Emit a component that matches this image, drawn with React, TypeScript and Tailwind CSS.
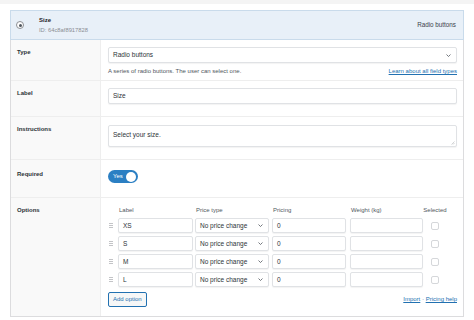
import React from 'react'

const field =
  'h-[15px] border border-[#e0e2e5] rounded-[2px] bg-white px-[4px] flex items-center text-[6.5px] text-[#2c3338] shadow-[0_1px_1px_rgba(0,0,0,0.05)]'

function Chevron({ className = '' }: { className?: string }) {
  return (
    <svg width="5" height="3" viewBox="0 0 5 3" className={className}>
      <polyline points="0.5,0.5 2.5,2.5 4.5,0.5" fill="none" stroke="#50575e" strokeWidth="0.8" />
    </svg>
  )
}

function Handle() {
  return (
    <div className="flex flex-col gap-[1px] w-[4px] ml-[1px]">
      <span className="h-[1px] bg-[#c3c4c7]" />
      <span className="h-[1px] bg-[#c3c4c7]" />
      <span className="h-[1px] bg-[#c3c4c7]" />
    </div>
  )
}

function Row({ label, h, pt, children }: { label: string; h: string; pt: string; children: React.ReactNode }) {
  return (
    <div className={`flex border-b border-[#eeeeee] ${h}`}>
      <div className="w-[90px] shrink-0 bg-[#f9f9f9] border-r border-[#eeeeee] pl-[6px]">
        <div className={`${pt} text-[6px] leading-[8px] font-bold text-[#2c3338]`}>{label}</div>
      </div>
      <div className="flex-1 pl-[7px] pr-[6px]">{children}</div>
    </div>
  )
}

const options = ['XS', 'S', 'M', 'L']

export default function App() {
  return (
    <div className="w-[474px] h-[320px] overflow-hidden bg-white font-['Liberation_Sans',Arial,sans-serif]">
      <div className="h-[4px] bg-[#f4f4f4]" />
      <div className="pt-[6px] pl-[10px] pr-[10px]">
        {/* field header */}
        <div className="h-[30px] border border-[#c9dbeb] bg-[#e8f0f8] flex items-center pl-[5px] pr-[7px]">
          <div className="w-[8px] h-[8px] rounded-full border border-[#8c8f94] bg-white flex items-center justify-center">
            <div className="w-[3px] h-[3px] rounded-full bg-[#50575e]" />
          </div>
          <div className="ml-[15px] flex flex-col">
            <span className="text-[6px] leading-[8px] font-bold text-[#1d2327]">Size</span>
            <span className="mt-[2px] text-[5.8px] leading-[8px] text-[#8c8f94]">ID: 64c8af8917828</span>
          </div>
          <span className="ml-auto text-[6.3px] text-[#3c434a]">Radio buttons</span>
        </div>

        {/* settings */}
        <div className="border-x border-b border-[#dcdcde] flex flex-col">
          <Row label="Type" h="h-[41px]" pt="pt-[8px]">
            <div className="pt-[7px]">
              <div className={`${field} h-[16px] justify-between pr-[5px]`}>
                <span>Radio buttons</span>
                <Chevron />
              </div>
              <div className="mt-[4px] flex justify-between text-[6px] leading-[8px]">
                <span className="text-[#50575e]">A series of radio buttons. The user can select one.</span>
                <span className="text-[#2271b1] underline">Learn about all field types</span>
              </div>
            </div>
          </Row>

          <Row label="Label" h="h-[36px]" pt="pt-[8px]">
            <div className="pt-[7px]">
              <div className={`${field} h-[16px]`}>Size</div>
            </div>
          </Row>

          <Row label="Instructions" h="h-[43px]" pt="pt-[8px]">
            <div className="pt-[8px]">
              <div className="relative h-[22px] border border-[#e0e2e5] rounded-[2px] bg-white px-[4px] pt-[5px] text-[6.5px] leading-[8px] text-[#2c3338] shadow-[0_1px_1px_rgba(0,0,0,0.05)]">
                Select your size.
                <svg width="4" height="4" viewBox="0 0 4 4" className="absolute right-[1px] bottom-[1px]">
                  <line x1="0.5" y1="3.5" x2="3.5" y2="0.5" stroke="#a7aaad" strokeWidth="0.5" />
                  <line x1="2" y1="3.5" x2="3.5" y2="2" stroke="#a7aaad" strokeWidth="0.5" />
                </svg>
              </div>
            </div>
          </Row>

          <Row label="Required" h="h-[38px]" pt="pt-[10px]">
            <div className="pt-[10px]">
              <div className="w-[30px] h-[13px] rounded-full bg-[#2b7fc3] flex items-center pl-[5px] pr-[2px] justify-between">
                <span className="text-[6px] text-white">Yes</span>
                <span className="w-[10px] h-[10px] rounded-full bg-white" />
              </div>
            </div>
          </Row>

          <div className="flex h-[118px]">
            <div className="w-[90px] shrink-0 bg-[#f9f9f9] border-r border-[#eeeeee] pl-[6px]">
              <div className="pt-[8px] text-[6px] leading-[8px] font-bold text-[#2c3338]">Options</div>
            </div>
            <div className="flex-1 pl-[7px] pr-[6px] pt-[8px]">
              <div className="grid grid-cols-[10px_77px_77px_78px_73px_24px] text-[6px] leading-[8px] text-[#50575e]">
                <span />
                <span className="pl-[1px]">Label</span>
                <span className="pl-[1px]">Price type</span>
                <span className="pl-[1px]">Pricing</span>
                <span className="pl-[1px]">Weight (kg)</span>
                <span className="text-center">Selected</span>
              </div>
              <div className="mt-[4px] flex flex-col gap-[3px]">
                {options.map((o) => (
                  <div key={o} className="grid grid-cols-[10px_77px_77px_78px_73px_24px] items-center">
                    <Handle />
                    <div className={`${field} w-[75px]`}>{o}</div>
                    <div className={`${field} w-[74px] justify-between pr-[5px]`}>
                      <span>No price change</span>
                      <Chevron />
                    </div>
                    <div className={`${field} w-[74px]`}>0</div>
                    <div className={`${field} w-[73px]`} />
                    <div className="flex justify-center">
                      <span className="w-[8px] h-[8px] rounded-[2px] border border-[#d5d7da] bg-white" />
                    </div>
                  </div>
                ))}
              </div>
              <div className="mt-[5px] flex items-center justify-between">
                <div className="h-[15px] px-[4px] border border-[#2271b1] rounded-[2px] bg-[#f6f7f7] flex items-center text-[6px] text-[#2271b1]">
                  Add option
                </div>
                <div className="text-[6px] text-[#2271b1]">
                  <span className="underline">Import</span>
                  <span> · </span>
                  <span className="underline">Pricing help</span>
                </div>
              </div>
            </div>
          </div>
        </div>
      </div>
    </div>
  )
}
